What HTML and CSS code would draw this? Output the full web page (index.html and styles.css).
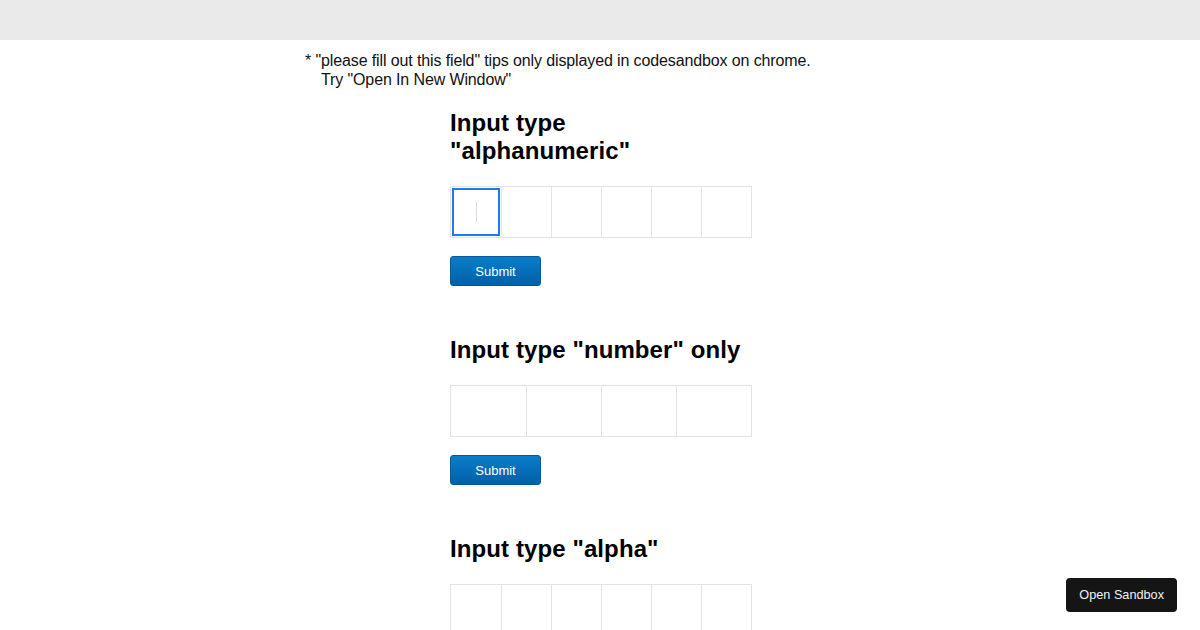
FILE: index.html
```html
<!DOCTYPE html>
<html lang="en">
<head>
<meta charset="utf-8">
<title>OTP input demo</title>
<link rel="stylesheet" href="styles.css">
</head>
<body>
<div class="topbar"></div>
<p class="note">* "please fill out this field" tips only displayed in codesandbox on chrome.<br><span class="note-indent">Try "Open In New Window"</span></p>
<main class="column">
  <section class="section first">
    <h2 class="title">Input type<br>"alphanumeric"</h2>
    <div class="otp otp-6">
      <span class="cell-wrap"><input class="cell focused" type="text" maxlength="1"><span class="caret"></span></span>
      <input class="cell" type="text" maxlength="1">
      <input class="cell" type="text" maxlength="1">
      <input class="cell" type="text" maxlength="1">
      <input class="cell" type="text" maxlength="1">
      <input class="cell" type="text" maxlength="1">
    </div>
    <button class="submit" type="button">Submit</button>
  </section>
  <section class="section">
    <h2 class="title">Input type "number" only</h2>
    <div class="otp otp-4">
      <input class="cell" type="text" maxlength="1">
      <input class="cell" type="text" maxlength="1">
      <input class="cell" type="text" maxlength="1">
      <input class="cell" type="text" maxlength="1">
    </div>
    <button class="submit" type="button">Submit</button>
  </section>
  <section class="section">
    <h2 class="title">Input type "alpha"</h2>
    <div class="otp otp-6">
      <input class="cell" type="text" maxlength="1">
      <input class="cell" type="text" maxlength="1">
      <input class="cell" type="text" maxlength="1">
      <input class="cell" type="text" maxlength="1">
      <input class="cell" type="text" maxlength="1">
      <input class="cell" type="text" maxlength="1">
    </div>
    <button class="submit" type="button">Submit</button>
  </section>
</main>
<a class="sandbox" href="#">Open Sandbox</a>
</body>
</html>
```
FILE: styles.css
```css
html, body {
  margin: 0;
  padding: 0;
  background: #fff;
  font-family: "Liberation Sans", Arial, sans-serif;
  color: #000;
  overflow: hidden;
}

.topbar {
  height: 40px;
  background: #eaeaea;
}

.note {
  width: 590px;
  margin: 11px auto 0;
  font-size: 16px;
  line-height: 19px;
  letter-spacing: -0.12px;
  color: #111;
}

.note-indent {
  padding-left: 16px;
}

.column {
  width: 302px;
  margin-left: calc(50% - 150px);
}

.section {
  margin-top: 50px;
}

.section.first {
  margin-top: 20px;
}

.title {
  margin: 0 0 21px;
  font-size: 24px;
  line-height: 28px;
  font-weight: bold;
  letter-spacing: 0.1px;
}

.otp {
  display: grid;
  height: 52px;
}

.otp-6 {
  grid-template-columns: 52px repeat(5, 50px);
}

.otp-4 {
  grid-template-columns: 77px repeat(3, 75px);
}

.cell,
.cell-wrap {
  min-width: 0;
  margin-left: -1px;
}

.otp > :first-child {
  margin-left: 0;
}

.cell {
  box-sizing: border-box;
  width: auto;
  height: 52px;
  padding: 0;
  border: 1px solid #e3e3e3;
  border-radius: 0;
  background: #fff;
  outline: none;
  caret-color: transparent;
  font: 20px "Liberation Sans", Arial, sans-serif;
  text-align: center;
}

.cell-wrap {
  position: relative;
  display: flex;
}

.cell-wrap .cell {
  width: 100%;
  margin: 0;
}

.cell.focused {
  outline: 2px solid #1a7af8;
  outline-offset: -4px;
}

.caret {
  position: absolute;
  left: 26px;
  top: 16px;
  width: 1px;
  height: 20px;
  background: #d8d8d8;
}

.submit {
  display: block;
  box-sizing: border-box;
  margin-top: 18px;
  width: 91px;
  height: 30px;
  padding: 0;
  border: 1px solid #0a5895;
  border-radius: 3px;
  background: linear-gradient(#0b7dca, #0060a7);
  color: #fff;
  font: 13px "Liberation Sans", Arial, sans-serif;
  cursor: pointer;
}

.sandbox {
  position: fixed;
  right: 23px;
  bottom: 18px;
  box-sizing: border-box;
  height: 34px;
  padding: 0 13px;
  display: flex;
  align-items: center;
  background: #151515;
  border-radius: 4px;
  color: #f2f2f2;
  font: 12.7px "Liberation Sans", Arial, sans-serif;
  text-decoration: none;
}
```
